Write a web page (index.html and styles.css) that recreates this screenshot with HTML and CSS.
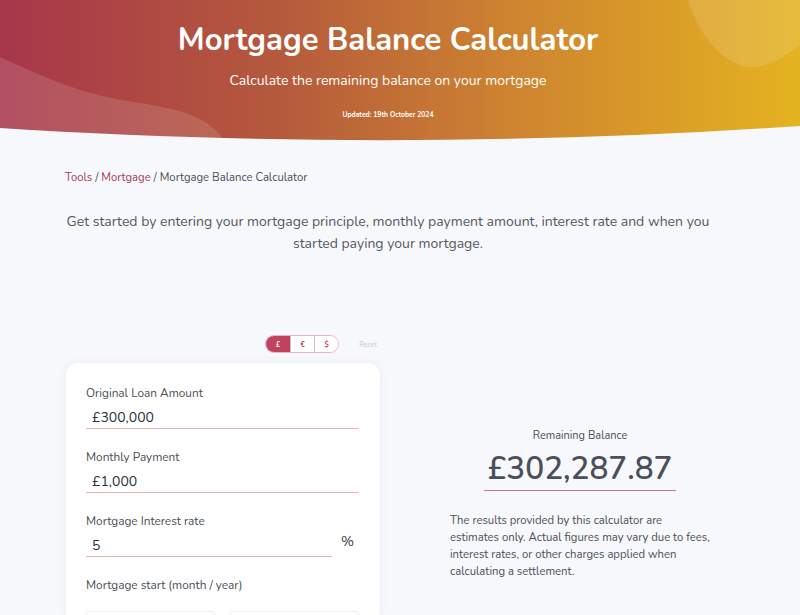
FILE: index.html
```html
<!DOCTYPE html>
<html lang="en">
<head>
<meta charset="utf-8">
<title>Mortgage Balance Calculator</title>
<link rel="stylesheet" href="styles.css">
</head>
<body>
<header class="hero">
  <svg class="hero-deco" viewBox="0 0 800 142" preserveAspectRatio="none" aria-hidden="true">
    <path d="M0 57 C40 75 80 95 140 103 C185 110 210 118 225 142 L0 142 Z" fill="#ffffff" fill-opacity="0.13"/>
    <path d="M688 0 C700 40 730 70 755 67 C775 65 790 52 800 45 L800 0 Z" fill="#ffffff" fill-opacity="0.13"/>
    <path d="M0 128 C250 144 520 145 800 126 L800 142 L0 142 Z" fill="#f7f8fc"/>
  </svg>
  <div class="hero-inner">
    <h1 class="hero-title">Mortgage Balance Calculator</h1>
    <p class="hero-sub">Calculate the remaining balance on your mortgage</p>
    <p class="hero-updated">Updated: 19th October 2024</p>
  </div>
</header>

<main class="page">
  <nav class="crumbs"><a href="#">Tools</a> / <a href="#">Mortgage</a> / Mortgage Balance Calculator</nav>
  <p class="intro">Get started by entering your mortgage principle, monthly payment amount, interest rate and when you started paying your mortgage.</p>

  <section class="calc">
    <div class="left">
      <div class="controls">
        <div class="currency">
          <span class="cur active">£</span>
          <span class="cur">€</span>
          <span class="cur">$</span>
        </div>
        <span class="reset">Reset</span>
      </div>
      <div class="card">
        <div class="field">
          <label class="label">Original Loan Amount</label>
          <div class="input">£300,000</div>
        </div>
        <div class="field">
          <label class="label">Monthly Payment</label>
          <div class="input">£1,000</div>
        </div>
        <div class="field">
          <label class="label">Mortgage Interest rate</label>
          <div class="input-row">
            <div class="input">5</div>
            <span class="unit">%</span>
          </div>
        </div>
        <div class="field">
          <label class="label">Mortgage start (month / year)</label>
          <div class="date-row">
            <div class="box"></div>
            <div class="box"></div>
          </div>
        </div>
      </div>
    </div>
    <div class="right">
      <div class="result">
        <div class="result-label">Remaining Balance</div>
        <div class="result-value">£302,287.87</div>
      </div>
      <p class="disclaimer">The results provided by this calculator are estimates only. Actual figures may vary due to fees, interest rates, or other charges applied when calculating a settlement.</p>
    </div>
  </section>
</main>
</body>
</html>
```
FILE: styles.css
```css
* { box-sizing: border-box; }
html, body { margin: 0; padding: 0; }
body {
  background: #f7f8fc;
  font-family: "Nunito", "Lato", "Noto Sans", sans-serif;
  color: #4b4f58;
  overflow: hidden;
}
.hero {
  position: relative;
  height: 142px;
  background: linear-gradient(90deg, #a7364b 0%, #b55a3c 35%, #cf8530 65%, #e4b321 100%);
  color: #fff;
  padding-top: 21px;
}
.hero-deco {
  position: absolute;
  left: 0; top: 0;
  width: 100%; height: 142px;
}
.hero-inner {
  position: relative;
  width: 776px;
  text-align: center;
}
.hero-title {
  margin: 0;
  font-size: 31px;
  font-weight: 700;
  line-height: 38px;
}
.hero-sub {
  margin: 12px 0 0;
  font-size: 14px;
  line-height: 20px;
}
.hero-updated {
  margin: 19px 0 0;
  font-size: 6.8px;
  font-weight: 700;
  line-height: 10px;
}
.page {
  width: 646px;
  margin-left: 65px;
  padding-top: 28px;
}
.crumbs {
  font-size: 11.3px;
  color: #4b4f58;
  line-height: 16px;
}
.crumbs a { color: #a83a56; text-decoration: none; }
.intro {
  margin: 25px 0 0;
  text-align: center;
  font-size: 14px;
  line-height: 22px;
  color: #545861;
}
.calc {
  display: grid;
  grid-template-columns: 315px 260px;
  column-gap: 70px;
  margin-top: 80px;
}
.controls {
  display: flex;
  justify-content: flex-end;
  align-items: center;
  gap: 20px;
  padding-right: 3px;
  height: 18px;
}
.currency {
  display: flex;
  border: 1px solid #e4b8c3;
  border-radius: 9px;
  overflow: hidden;
  height: 18px;
}
.cur {
  width: 24px;
  font-size: 7px;
  font-weight: 700;
  color: #b54764;
  display: flex;
  align-items: center;
  justify-content: center;
  background: #fff;
}
.cur + .cur { border-left: 1px solid #e4b8c3; }
.cur.active { background: #c2415f; color: #fff; }
.reset { font-size: 7px; color: #c9ccd3; }
.card {
  margin-top: 10px;
  margin-left: 1px;
  background: #fff;
  border-radius: 12px;
  box-shadow: 0 0 10px rgba(30, 40, 80, 0.05);
  padding: 22px 21px 0 20px;
  height: 260px;
}
.field + .field { margin-top: 20px; }
.label {
  display: block;
  font-size: 11.8px;
  line-height: 16px;
  color: #4b4f58;
}
.input {
  margin-top: 7px;
  font-size: 14px;
  line-height: 20px;
  color: #2e323a;
  padding: 0 6px 0;
  border-bottom: 1px solid #eab1bd;
  height: 21px;
}
.input-row {
  display: flex;
  align-items: flex-end;
}
.input-row .input { flex: 1; margin-right: 9px; }
.unit {
  font-size: 14px;
  color: #3a3e46;
  margin-right: 5px;
  position: relative;
  top: -6px;
}
.date-row {
  display: grid;
  grid-template-columns: 1fr 1fr;
  gap: 15px;
  margin-top: 18px;
}
.box {
  height: 30px;
  border: 1px solid #eceef2;
  border-radius: 3px;
}
.right {
  padding-top: 94px;
}
.result {
  display: flex;
  flex-direction: column;
  align-items: center;
}
.result-label {
  font-size: 11px;
  line-height: 14px;
  color: #4b4f58;
}
.result-value {
  margin-top: 7px;
  font-size: 31.5px;
  font-weight: 600;
  line-height: 38px;
  color: #4a4f5a;
  padding: 0 3px 2px;
  border-bottom: 1.5px solid #cf7285;
}
.disclaimer {
  margin: 21px 0 0;
  font-size: 11.3px;
  line-height: 17px;
  color: #4b4f58;
}
```
